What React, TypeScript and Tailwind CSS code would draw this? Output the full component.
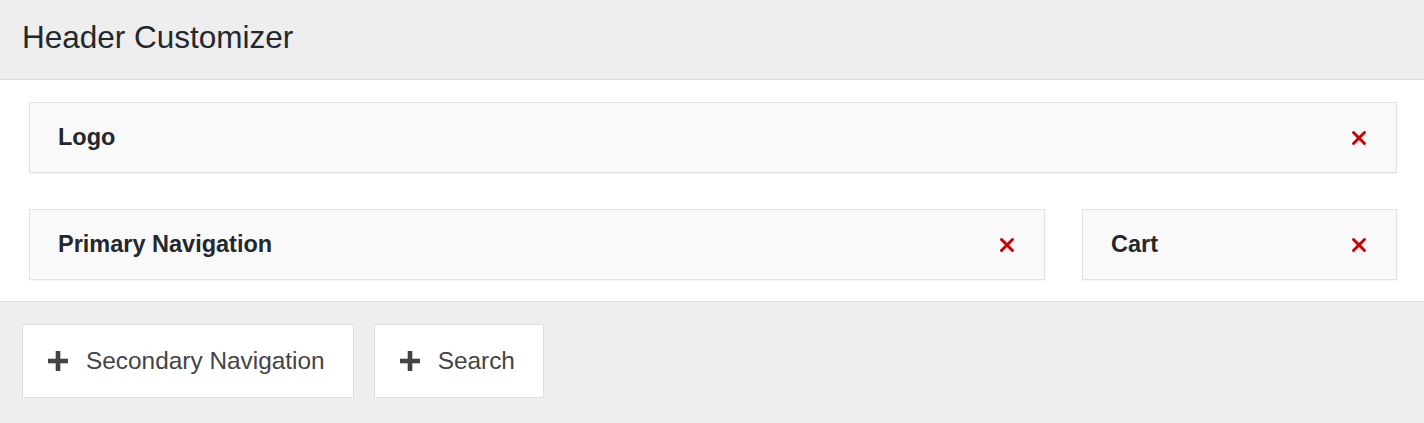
import { X } from "lucide-react";

function Item({ label, className = "" }: { label: string; className?: string }) {
  return (
    <div
      className={`flex h-[71px] items-center justify-between border border-[#e2e2e2] bg-[#f9f9f9] pl-[28px] pr-[26px] pt-[1px] shadow-[0_1px_1px_rgba(0,0,0,0.04)] ${className}`}
    >
      <span className="text-[23.5px] font-bold text-[#23282d]">{label}</span>
      <X className="h-[22px] w-[22px] text-[#c00]" strokeWidth={3.2} />
    </div>
  );
}

function AddButton({ label }: { label: string }) {
  return (
    <button className="flex h-[74px] items-center gap-[18px] border border-[#dddddd] bg-white pl-[25px] pr-[28px] text-[24.4px] text-[#444]">
      <svg viewBox="0 0 20 20" className="h-[20px] w-[20px] shrink-0" fill="#444">
        <rect x="7.7" y="0" width="4.6" height="20" />
        <rect x="0" y="7.7" width="20" height="4.6" />
      </svg>
      <span>{label}</span>
    </button>
  );
}

export default function App() {
  return (
    <div className="h-[423px] w-full bg-[#eeeeee] font-['Liberation_Sans',Arial,sans-serif]">
      {/* Header */}
      <div className="flex h-[80px] items-center border-b border-[#dddddd] px-[22px] pb-[4px]">
        <h1 className="text-[31.5px] font-normal text-[#23282d]">Header Customizer</h1>
      </div>

      {/* Layout rows */}
      <div className="flex flex-col gap-[36px] border-b border-[#dddddd] bg-white pt-[22px] pb-[21px] pl-[29px] pr-[27px]">
        <Item label="Logo" />
        <div className="flex gap-[37px]">
          <Item label="Primary Navigation" className="flex-1" />
          <Item label="Cart" className="w-[315px]" />
        </div>
      </div>

      {/* Available items */}
      <div className="flex gap-[20px] px-[22px] pt-[22px]">
        <AddButton label="Secondary Navigation" />
        <AddButton label="Search" />
      </div>
    </div>
  );
}
